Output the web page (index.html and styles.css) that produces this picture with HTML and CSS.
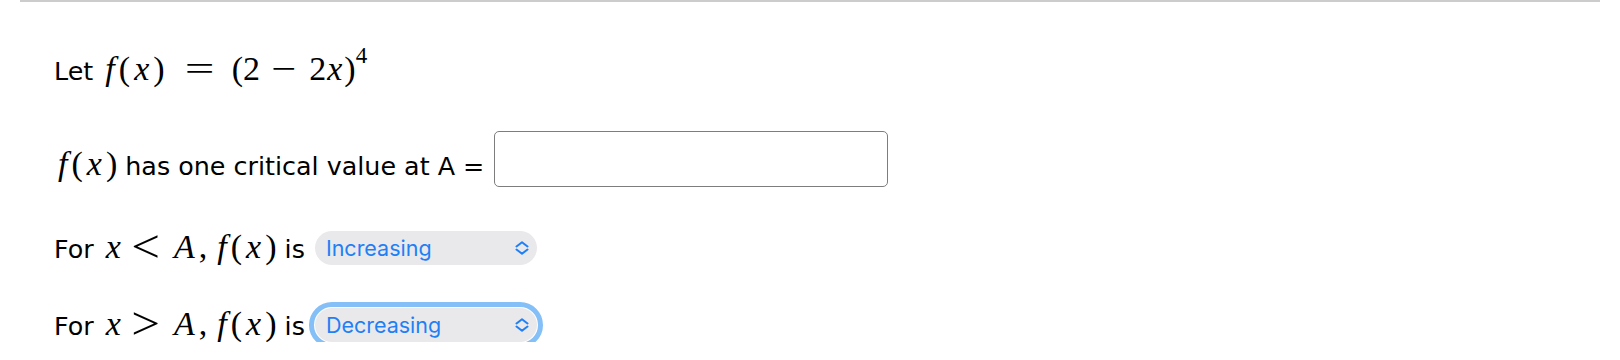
FILE: index.html
```html
<!DOCTYPE html>
<html lang="en">
<head>
<meta charset="utf-8">
<title>Critical value</title>
<link rel="stylesheet" href="styles.css">
</head>
<body>
<div class="rule"></div>
<div class="problem">
  <div class="row r1">
    <span class="txt">Let <span class="m"><i>f</i>(<i>x</i>)<span class="rel eq">=</span>(2<span class="bin">−</span>2<i class="tight">x</i>)<sup>4</sup></span></span>
  </div>
  <div class="row r2">
    <span class="txt"><span class="m"><i>f</i>(<i>x</i>)</span> has one critical value at A =</span>
    <div class="ans"></div>
  </div>
  <div class="row r3">
    <span class="txt">For <span class="m"><i>x</i><span class="rel cmp">&lt;</span><i>A</i>,<span class="sp"></span><i>f</i>(<i>x</i>)</span> is</span>
    <div class="select"><span class="opt">Increasing</span><svg class="chev" viewBox="0 0 14 14" width="14" height="14"><path d="M1.5 5.5 L7 1.2 L12.5 5.5 M1.5 8.5 L7 12.8 L12.5 8.5"/></svg></div>
  </div>
  <div class="row r4">
    <span class="txt">For <span class="m"><i>x</i><span class="rel cmp">&gt;</span><i>A</i>,<span class="sp"></span><i>f</i>(<i>x</i>)</span> is</span>
    <div class="select focus"><span class="opt">Decreasing</span><svg class="chev" viewBox="0 0 14 14" width="14" height="14"><path d="M1.5 5.5 L7 1.2 L12.5 5.5 M1.5 8.5 L7 12.8 L12.5 8.5"/></svg></div>
  </div>
</div>
</body>
</html>
```

FILE: styles.css
```css
html, body {
  margin: 0;
  padding: 0;
  background: #fff;
}
body {
  font-family: "DejaVu Sans", Verdana, sans-serif;
  font-size: 25.4px;
  color: #000;
}
.rule {
  margin: 0 20px;
  height: 2px;
  background: #cccccc;
}
.problem {
  padding-left: 54px;
}
.row {
  display: flex;
  align-items: center;
}
.txt {
  white-space: pre;
  line-height: 30px;
}
.m {
  font-family: "Liberation Serif", "Times New Roman", serif;
  font-size: 34px;
}
.m i {
  font-style: italic;
  padding: 0 4px;
}
.m i.tight {
  padding: 0 2px 0 1px;
}
.m sup {
  font-size: 23px;
  vertical-align: 17px;
  line-height: 0;
  margin-left: 0;
}
.rel {
  display: inline-block;
}
.rel.eq {
  margin: 0 23px 0 25px;
  transform: scaleX(1.55);
}
.rel.cmp {
  margin: 0 15px 0 11px;
  transform: scale(1.5, 1.35);
}
.bin {
  display: inline-block;
  margin: 0 16px 0 14px;
  transform: scaleX(1.3);
}
.sp {
  display: inline-block;
  width: 6px;
}
.r1 {
  height: 40px;
  margin-top: 48px;
}
.r2 {
  margin-top: 41px;
  height: 56px;
}
.r2 .txt {
  padding-top: 12px;
}
.ans {
  width: 394px;
  height: 56px;
  margin-left: 10px;
  border: 1.5px solid #7d7d7d;
  border-radius: 5px;
  box-sizing: border-box;
}
.r3 {
  margin-top: 43px;
  height: 35px;
}
.r4 {
  margin-top: 42px;
  height: 35px;
}
.select {
  width: 222px;
  height: 34px;
  margin-left: 10px;
  box-sizing: border-box;
  border-radius: 17px;
  background: #e9e9ec;
  display: flex;
  align-items: center;
  justify-content: space-between;
  padding: 0 8px 0 11px;
  font-family: Inter, "Noto Sans", sans-serif;
  font-size: 21.5px;
  color: #1f7ff5;
}
.select.focus {
  outline: 5px solid #84bff7;
  outline-offset: 1px;
}
.chev {
  display: block;
}
.chev path {
  fill: none;
  stroke: #1f7ff5;
  stroke-width: 2;
  stroke-linecap: round;
  stroke-linejoin: round;
}
```
